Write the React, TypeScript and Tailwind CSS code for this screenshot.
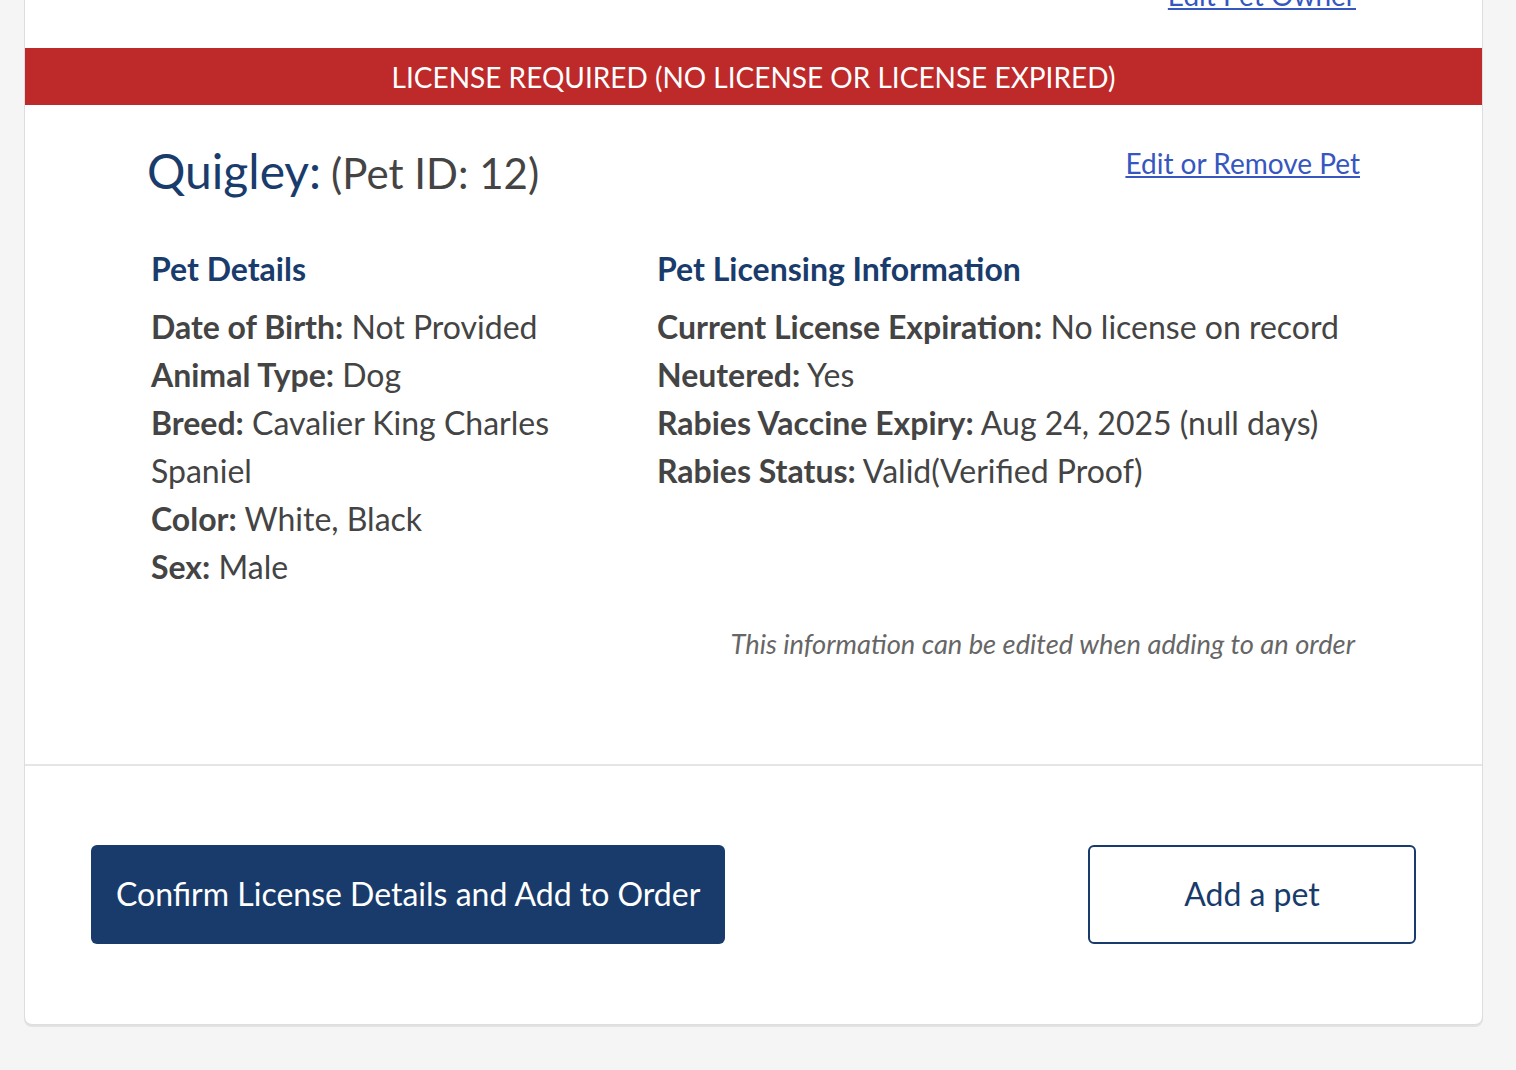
import React from "react";

const petDetails = [
    { label: "Date of Birth:", value: "Not Provided" },
    { label: "Animal Type:", value: "Dog" },
    { label: "Breed:", value: "Cavalier King Charles Spaniel" },
    { label: "Color:", value: "White, Black" },
    { label: "Sex:", value: "Male" },
];

const licensing = [
    { label: "Current License Expiration:", value: "No license on record" },
    { label: "Neutered:", value: "Yes" },
    { label: "Rabies Vaccine Expiry:", value: "Aug 24, 2025 (null days)" },
    { label: "Rabies Status:", value: "Valid(Verified Proof)" },
];

function InfoList({ items }: { items: { label: string; value: string }[] }) {
    return (
        <div className="text-[32px] leading-[48px] text-[#444444]">
            {items.map((item) => (
                <div key={item.label}>
                    <span className="font-bold">{item.label}</span> {item.value}
                </div>
            ))}
        </div>
    );
}

export default function App() {
    return (
        <div className="min-h-screen bg-[#f5f5f5] font-['Lato','Noto_Sans',sans-serif] overflow-hidden">
            <div className="-mt-[23px] ml-[24px] mr-[33px] bg-white border border-[#dddddd] rounded-b-[8px] shadow-[0_2px_0_#e2e2e2]">
                {/* Owner link (cut off at the top) */}
                <div className="flex justify-end pr-[126px] mb-[36px]">
                    <a href="#" className="text-[28px] leading-[34px] text-[#3656c0] underline">
                        Edit Pet Owner
                    </a>
                </div>

                {/* Status banner */}
                <div className="h-[57px] flex items-center justify-center bg-[#be2929] text-white text-[28px]">
                    LICENSE REQUIRED (NO LICENSE OR LICENSE EXPIRED)
                </div>

                {/* Pet */}
                <div className="px-[122px] pt-[37px] pb-[103px]">
                    <div className="flex items-start justify-between">
                        <h2 className="flex items-baseline gap-[10px] leading-[1.2]">
                            <span className="text-[48px] text-[#1a3c6c]">Quigley:</span>
                            <span className="text-[42px] text-[#444444]">(Pet ID: 12)</span>
                        </h2>
                        <a href="#" className="mt-[5px] text-[28px] leading-[1.2] text-[#3656c0] underline">
                            Edit or Remove Pet
                        </a>
                    </div>

                    <div className="mt-[50px] pl-[4px] grid grid-cols-[506px_1fr]">
                        <div className="pr-[40px]">
                            <h3 className="text-[32px] leading-[1.2] font-bold text-[#1a3c6c] mb-[15px]">
                                Pet Details
                            </h3>
                            <InfoList items={petDetails} />
                        </div>
                        <div>
                            <h3 className="text-[32px] leading-[1.2] font-bold text-[#1a3c6c] mb-[15px]">
                                Pet Licensing Information
                            </h3>
                            <InfoList items={licensing} />
                        </div>
                    </div>

                    <p className="mt-[37px] pr-[5px] text-right italic text-[27.3px] leading-[1.2] text-[#666666]">
                        This information can be edited when adding to an order
                    </p>
                </div>

                {/* Actions */}
                <div className="border-t-2 border-[#e5e5e5] px-[66px] pt-[79px] pb-[80px] flex items-center justify-between">
                    <button className="h-[99px] px-[25px] rounded-[6px] bg-[#183b6b] text-white text-[32px]">
                        Confirm License Details and Add to Order
                    </button>
                    <button className="h-[99px] w-[328px] rounded-[6px] border-2 border-[#183b6b] bg-white text-[#183b6b] text-[32px]">
                        Add a pet
                    </button>
                </div>
            </div>
        </div>
    );
}
